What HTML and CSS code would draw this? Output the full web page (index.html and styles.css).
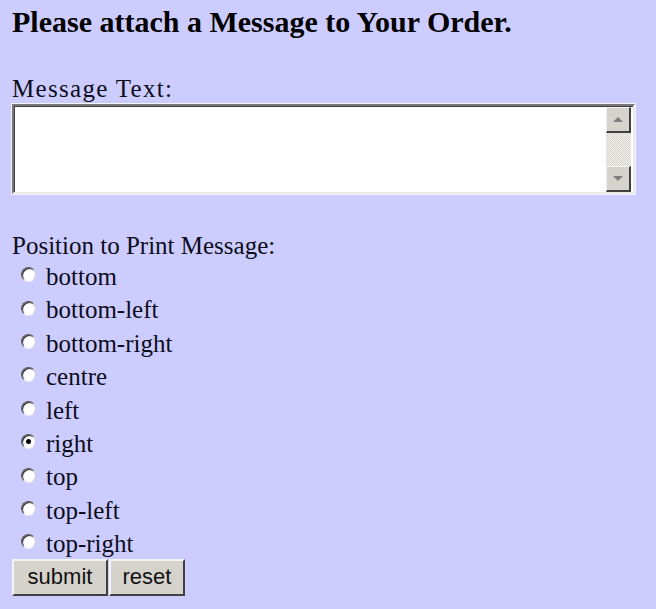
FILE: index.html
```html
<!DOCTYPE html>
<html>
<head>
<meta charset="utf-8">
<link rel="stylesheet" href="styles.css">
</head>
<body>
<form class="page">
  <h1 class="title">Please attach a Message to Your Order.</h1>
  <label class="label msg-label">Message Text:</label>
  <div class="textbox">
    <textarea class="text-input"></textarea>
    <div class="scrollbar">
      <div class="sb-btn"><span class="arrow up"></span></div>
      <div class="sb-track"></div>
      <div class="sb-btn"><span class="arrow down"></span></div>
    </div>
  </div>
  <div class="label pos-label">Position to Print Message:</div>
  <div class="options">
    <label class="opt"><input type="radio" name="pos" class="radio"><span>bottom</span></label>
    <label class="opt"><input type="radio" name="pos" class="radio"><span>bottom-left</span></label>
    <label class="opt"><input type="radio" name="pos" class="radio"><span>bottom-right</span></label>
    <label class="opt"><input type="radio" name="pos" class="radio"><span>centre</span></label>
    <label class="opt"><input type="radio" name="pos" class="radio"><span>left</span></label>
    <label class="opt"><input type="radio" name="pos" class="radio" checked><span>right</span></label>
    <label class="opt"><input type="radio" name="pos" class="radio"><span>top</span></label>
    <label class="opt"><input type="radio" name="pos" class="radio"><span>top-left</span></label>
    <label class="opt"><input type="radio" name="pos" class="radio"><span>top-right</span></label>
  </div>
  <div class="buttons">
    <button type="button" class="btn btn-submit">submit</button><button type="button" class="btn btn-reset">reset</button>
  </div>
</form>
</body>
</html>
```
FILE: styles.css
```css
html, body {
  margin: 0;
  padding: 0;
  background: #ccccfe;
}
body {
  font-family: "Liberation Serif", "Times New Roman", serif;
  color: #0c0c1c;
}
.page {
  padding: 7px 12px 0 12px;
  display: flex;
  flex-direction: column;
  align-items: flex-start;
}
.title {
  font-size: 30px;
  font-weight: bold;
  margin: 0;
  line-height: 30px;
  color: #000;
}
.label {
  font-size: 25px;
  line-height: 28px;
}
.msg-label {
  margin-top: 38px;
  letter-spacing: 1.3px;
}
.textbox {
  box-sizing: border-box;
  width: 623px;
  height: 90px;
  margin-top: 1px;
  display: flex;
  background: #fff;
  border-top: 2px solid #777;
  border-left: 2px solid #777;
  border-right: 2px solid #e8e8e8;
  border-bottom: 2px solid #e8e8e8;
  box-shadow: inset 1px 1px 0 #404040, 0 0 0 1px #f4f4ff;
}
.text-input {
  flex: 1;
  border: none;
  outline: none;
  resize: none;
  background: transparent;
  margin: 0;
  padding: 2px;
}
.scrollbar {
  width: 25px;
  margin: 1px 2px 0 0;
  display: flex;
  flex-direction: column;
  background-color: #e8e8e8;
  background-image: repeating-conic-gradient(#d4d0c8 0 25%, #f4f4f4 0 50%);
  background-size: 2px 2px;
}
.sb-btn {
  height: 26px;
  box-sizing: border-box;
  background: #d6d3cc;
  border-top: 1px solid #f4f4f4;
  border-left: 1px solid #f4f4f4;
  border-right: 2px solid #404040;
  border-bottom: 2px solid #404040;
  display: flex;
  align-items: center;
  justify-content: center;
}
.sb-track {
  flex: 1;
}
.arrow {
  width: 0;
  height: 0;
  border-left: 5px solid transparent;
  border-right: 5px solid transparent;
}
.arrow.up {
  border-bottom: 5px solid #808080;
}
.arrow.down {
  border-top: 5px solid #808080;
}
.pos-label {
  margin-top: 38px;
}
.options {
  display: flex;
  flex-direction: column;
  margin-top: 0;
}
.opt {
  display: flex;
  align-items: center;
  height: 33.4px;
  line-height: 33.4px;
  font-size: 25px;
  padding-left: 9px;
}
.radio {
  appearance: none;
  -webkit-appearance: none;
  margin: 0 10px 4px 0;
  width: 15px;
  height: 15px;
  border-radius: 50%;
  background: radial-gradient(circle at 58% 58%, #ffffff 0 45%, #e2e2e2 80%);
  border: 1px solid;
  border-color: #5a5a5a #cfcfcf #eeeeee #5a5a5a;
  box-shadow: inset 1px 1px 0 #2e2e2e;
  box-sizing: border-box;
  position: relative;
  flex: none;
}
.radio:checked::after {
  content: "";
  position: absolute;
  left: 4px;
  top: 4px;
  width: 5px;
  height: 5px;
  border-radius: 50%;
  background: #000;
}
.buttons {
  display: flex;
  margin-top: -2px;
}
.btn {
  font-family: "Liberation Sans", Arial, sans-serif;
  font-size: 22px;
  color: #111;
  background: #d6d3cc;
  height: 37px;
  padding: 0;
  box-sizing: border-box;
  border-top: 2px solid #f4f4f4;
  border-left: 2px solid #f4f4f4;
  border-right: 2px solid #404040;
  border-bottom: 2px solid #404040;
  margin: 0;
}
.btn-submit {
  width: 96px;
}
.btn-reset {
  width: 76px;
  margin-left: 1px;
}
```
